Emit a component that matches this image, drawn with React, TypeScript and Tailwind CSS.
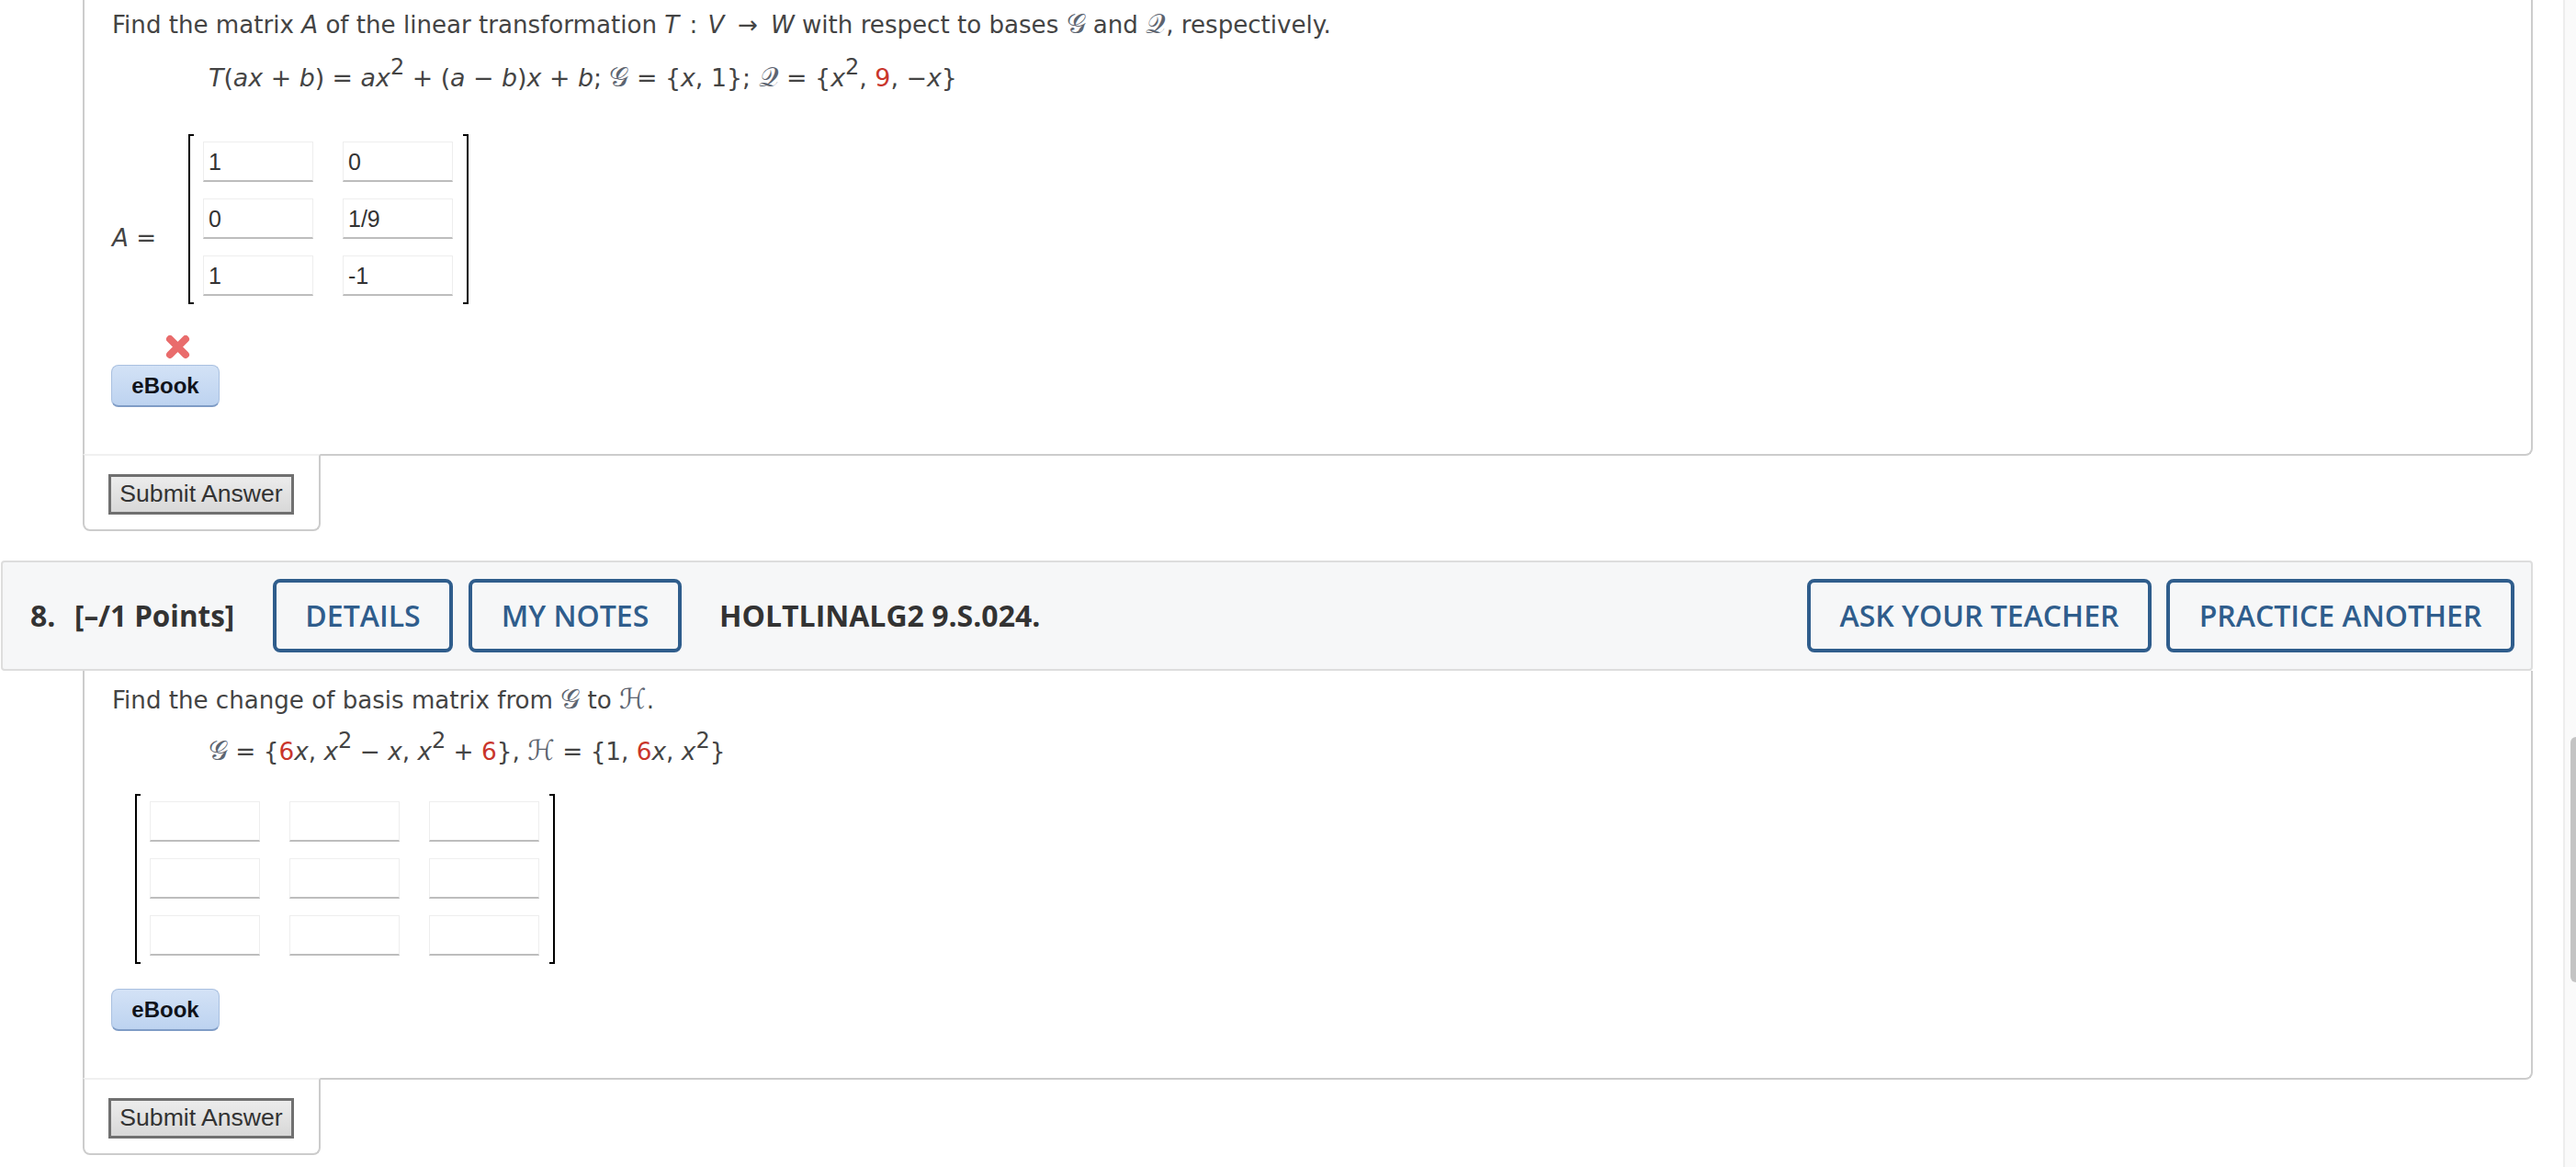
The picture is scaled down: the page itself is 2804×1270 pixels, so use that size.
import { Fragment } from "react";

const BODY_FONT = "font-['DejaVu_Sans',Verdana,sans-serif]";
const ARIAL = "font-['Liberation_Sans',Arial,sans-serif]";
const OPEN = "font-['Open_Sans',sans-serif]";

function Sup({ children }: { children: React.ReactNode }) {
  return <span className="relative -top-[13px] text-[24px] leading-none">{children}</span>;
}

function Red({ children }: { children: React.ReactNode }) {
  return <span className="text-[#c9352b]">{children}</span>;
}

function I({ children }: { children: React.ReactNode }) {
  return <span className="italic">{children}</span>;
}

function Script({ children }: { children: React.ReactNode }) {
  return <span className="text-[30px] leading-none text-[#5c6470]">{children}</span>;
}

function Bracket({ side }: { side: "left" | "right" }) {
  return (
    <div
      className={`w-[6px] border-y-2 border-black ${side === "left" ? "border-l-2" : "border-r-2"}`}
    />
  );
}

function Cell({ value }: { value?: string }) {
  return (
    <div
      className={`h-[44px] w-full border border-[#eeeeee] border-b-2 border-b-[#bdbdbd] pl-[5px] text-[25px] leading-[42px] text-[#333333] ${ARIAL}`}
    >
      {value}
    </div>
  );
}

function Matrix({ rows, cols }: { rows: string[][]; cols: string }) {
  return (
    <div className="flex">
      <Bracket side="left" />
      <div className={`grid ${cols} gap-x-[32px] gap-y-[18px] pt-[8px] pr-[11px] pb-[9px] pl-[10px]`}>
        {rows.map((row, r) => (
          <Fragment key={r}>
            {row.map((value, c) => (
              <Cell key={c} value={value} />
            ))}
          </Fragment>
        ))}
      </div>
      <Bracket side="right" />
    </div>
  );
}

function EBook() {
  return (
    <div
      className={`-ml-px flex h-[46px] w-[118px] items-center justify-center rounded-[8px] border border-[#a9c0e0] border-b-2 border-b-[#7f9cc6] bg-gradient-to-b from-[#d3e2f6] to-[#bdd3f0] text-[24px] font-bold text-[#10131a] ${ARIAL}`}
    >
      eBook
    </div>
  );
}

function SubmitTab() {
  return (
    <div className="-mt-[2px] h-[84px] w-[259px] rounded-b-[8px] border-x-2 border-t-2 border-b-2 border-x-[#cccccc] border-t-[#f0f0f0] border-b-[#cccccc] bg-white pt-[20px] pl-[26px]">
      <div
        className={`flex h-[44px] w-[202px] items-center justify-center border-[3px] border-[#707070] bg-gradient-to-b from-[#ececec] to-[#d8d8d8] text-[26.6px] text-[#333333] ${ARIAL}`}
      >
        Submit Answer
      </div>
    </div>
  );
}

function OutlineButton({ label, width }: { label: string; width: string }) {
  return (
    <div
      className={`flex h-[80px] ${width} items-center justify-center rounded-[8px] border-4 border-[#2f5d8c] text-[32px] font-semibold text-[#2f5d8c] ${OPEN}`}
    >
      {label}
    </div>
  );
}

export default function App() {
  return (
    <div className={`flex h-[1270px] overflow-hidden bg-white text-[26.1px] text-[#444444] ${BODY_FONT}`}>
      <div className="min-w-0 flex-1">
        {/* previous question, cut off at the top of the page */}
        <div className="ml-[90px]">
          <div className="mr-[33px] h-[496px] rounded-br-[8px] border-r-2 border-b-2 border-l-2 border-[#cccccc] pt-[10px] pl-[30px]">
            <div className="h-[34px] leading-[34px]">
              Find the matrix <I>A</I> of the linear transformation <I>T</I>
              <span className="mx-[3px]"> : </span>
              <I>V</I>
              <span className="mx-[6px]"> → </span>
              <I>W</I> with respect to bases <Script>𝒢</Script> and <Script>𝒬</Script>, respectively.
            </div>
            <div className="mt-[24px] h-[34px] pl-[105px] text-[26.8px] leading-[34px]">
              <I>T</I>(<I>ax</I> + <I>b</I>) = <I>ax</I>
              <Sup>2</Sup> + (<I>a</I> − <I>b</I>)<I>x</I> + <I>b</I>; <Script>𝒢</Script> = {"{"}
              <I>x</I>, 1{"}"}; <Script>𝒬</Script> = {"{"}
              <I>x</I>
              <Sup>2</Sup>, <Red>9</Red>, −<I>x</I>
              {"}"}
            </div>
            <div className="mt-[44px] flex items-center">
              <div className="w-[83px] pt-[42px]">
                <I>A</I> =
              </div>
              <Matrix
                cols="grid-cols-[120px_120px]"
                rows={[
                  ["1", "0"],
                  ["0", "1/9"],
                  ["1", "-1"],
                ]}
              />
            </div>
            <svg viewBox="0 0 27 27" className="mt-[33px] ml-[58px] h-[27px] w-[27px]">
              <path d="M5 5 22 22M22 5 5 22" stroke="#e96c6c" strokeWidth="8" strokeLinecap="round" />
            </svg>
            <div className="mt-[6px]">
              <EBook />
            </div>
          </div>
          <SubmitTab />
        </div>

        {/* question 8 header */}
        <div className="mt-[32px] ml-px mr-[33px] flex h-[120px] items-center rounded-[4px] border-2 border-[#dddddd] bg-[#f6f7f8] pr-[18px] pl-[30px] text-[#333333]">
          <span className={`w-[48px] text-[32px] font-bold ${OPEN}`}>8.</span>
          <span className={`w-[216px] text-[31.4px] font-bold ${OPEN}`}>[–/1 Points]</span>
          <OutlineButton label="DETAILS" width="w-[196px]" />
          <div className="ml-[17px]">
            <OutlineButton label="MY NOTES" width="w-[232px]" />
          </div>
          <span className={`ml-[41px] text-[32px] font-bold ${OPEN}`}>HOLTLINALG2 9.S.024.</span>
          <div className="ml-auto flex gap-[16px]">
            <OutlineButton label="ASK YOUR TEACHER" width="w-[375px]" />
            <OutlineButton label="PRACTICE ANOTHER" width="w-[379px]" />
          </div>
        </div>

        {/* question 8 body */}
        <div className="ml-[90px]">
          <div className="mr-[33px] h-[445px] rounded-br-[8px] border-r-2 border-b-2 border-l-2 border-[#cccccc] pt-[15px] pl-[30px]">
            <div className="h-[34px] leading-[34px]">
              Find the change of basis matrix from <Script>𝒢</Script> to <Script>ℋ</Script>.
            </div>
            <div className="mt-[22px] h-[34px] pl-[105px] text-[26.3px] leading-[34px]">
              <Script>𝒢</Script> = {"{"}
              <Red>6</Red>
              <I>x</I>, <I>x</I>
              <Sup>2</Sup> − <I>x</I>, <I>x</I>
              <Sup>2</Sup> + <Red>6</Red>
              {"}"}, <Script>ℋ</Script> = {"{"}1, <Red>6</Red>
              <I>x</I>, <I>x</I>
              <Sup>2</Sup>
              {"}"}
            </div>
            <div className="mt-[29px] ml-[25px]">
              <Matrix
                cols="grid-cols-[120px_120px_120px]"
                rows={[
                  ["", "", ""],
                  ["", "", ""],
                  ["", "", ""],
                ]}
              />
            </div>
            <div className="mt-[27px]">
              <EBook />
            </div>
          </div>
          <SubmitTab />
        </div>
      </div>

      {/* browser scrollbar */}
      <div className="w-[14px] border-l-2 border-[#ededed] bg-[#fafafa] pt-[802px] pl-[6px]">
        <div className="h-[267px] rounded-l-[6px] bg-[#c4c4c4]" />
      </div>
    </div>
  );
}
